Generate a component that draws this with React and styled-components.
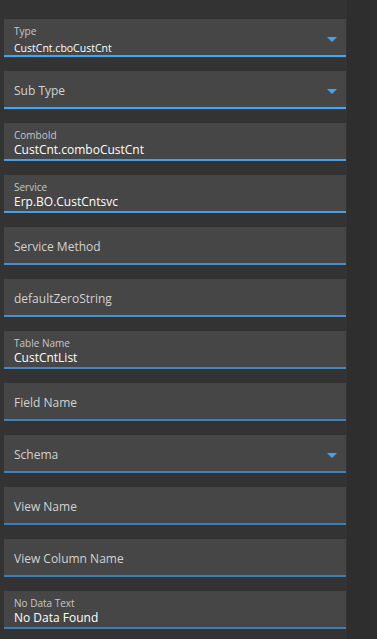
import React from "react";
import styled, { createGlobalStyle } from "styled-components";

const Global = createGlobalStyle`
  html, body { margin: 0; padding: 0; background: #2e2e2e; }
  body { font-family: "Open Sans", "Noto Sans", sans-serif; }
`;

const Page = styled.div`
  width: 377px;
  height: 639px;
  display: flex;
  background: #2e2e2e;
  overflow: hidden;
`;

const Panel = styled.div`
  width: 347px;
  background: #333333;
  padding: 19px 0 0 4px;
  display: flex;
  flex-direction: column;
  gap: 14px;
  box-sizing: border-box;
`;

const Field = styled.div`
  position: relative;
  height: 38px;
  width: 342px;
  background: #464646;
  border-bottom: 2px solid ${(p) => p.$line};
  box-shadow: ${(p) => (p.$shadow ? "0 1px 0 #4a3b2e" : "none")};
  display: flex;
  flex-direction: column;
  padding: ${(p) => (p.$filled ? "6px" : "12px")} 30px 0 10px;
  box-sizing: border-box;
  flex: none;
`;

const Label = styled.div`
  font-size: 10px;
  line-height: 12px;
  height: 12px;
  color: #c8c8c8;
  white-space: nowrap;
`;

const Value = styled.div`
  font-size: ${(p) => (p.$small ? "10.5px" : "12px")};
  line-height: ${(p) => (p.$small ? "14px" : "16px")};
  margin-top: ${(p) => (p.$small ? "4px" : "1px")};
  color: #ffffff;
  white-space: nowrap;
`;

const Placeholder = styled.div`
  font-size: 12px;
  line-height: 16px;
  color: #d2d2d2;
  white-space: nowrap;
`;

const Arrow = styled.svg`
  position: absolute;
  right: 9px;
  top: 18px;
  width: 10px;
  height: 5px;
`;

const fields = [
  { label: "Type", value: "CustCnt.cboCustCnt", small: true, dd: true, line: "#3fa6f5", shadow: true },
  { ph: "Sub Type", dd: true, line: "#3fa6f5", shadow: true },
  { label: "ComboId", value: "CustCnt.comboCustCnt", line: "#4a9fe2" },
  { label: "Service", value: "Erp.BO.CustCntsvc", line: "#4a9fe2" },
  { ph: "Service Method", line: "#4790cc" },
  { ph: "defaultZeroString", line: "#4790cc" },
  { label: "Table Name", value: "CustCntList", line: "#4388c4" },
  { ph: "Field Name", line: "#3f82bb" },
  { ph: "Schema", dd: true, line: "#3f82bb" },
  { ph: "View Name", line: "#3d7eb6" },
  { ph: "View Column Name", line: "#3d7eb6" },
  { label: "No Data Text", value: "No Data Found", line: "#3d7eb6" },
];

export default function App() {
  return (
    <>
      <Global />
      <Page>
        <Panel>
          {fields.map((f, i) => (
            <Field key={i} $line={f.line} $shadow={f.shadow} $filled={!!f.label}>
              {f.label ? (
                <>
                  <Label>{f.label}</Label>
                  <Value $small={f.small}>{f.value}</Value>
                </>
              ) : (
                <Placeholder>{f.ph}</Placeholder>
              )}
              {f.dd && (
                <Arrow viewBox="0 0 10 5">
                  <path d="M0 0 L10 0 L5 5 Z" fill="#3ea4f4" />
                </Arrow>
              )}
            </Field>
          ))}
        </Panel>
      </Page>
    </>
  );
}
